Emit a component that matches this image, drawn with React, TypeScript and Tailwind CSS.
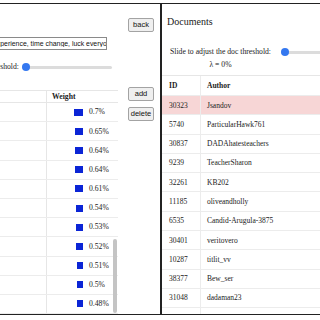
const words = [
  { w: "experience", p: 0.7 },
  { w: "time", p: 0.65 },
  { w: "change", p: 0.64 },
  { w: "luck", p: 0.64 },
  { w: "everyone", p: 0.61 },
  { w: "job", p: 0.54 },
  { w: "work", p: 0.53 },
  { w: "life", p: 0.52 },
  { w: "people", p: 0.51 },
  { w: "years", p: 0.5 },
  { w: "school", p: 0.48 },
  { w: "teacher", p: 0.47 },
];

const docs = [
  ["30323", "Jsandov"],
  ["5740", "ParticularHawk761"],
  ["30837", "DADAhatesteachers"],
  ["9239", "TeacherSharon"],
  ["32261", "KB202"],
  ["11185", "oliveandholly"],
  ["6535", "Candid-Arugula-3875"],
  ["30401", "veritovero"],
  ["10287", "titlit_vv"],
  ["38377", "Bew_ser"],
  ["31048", "dadaman23"],
  ["2946", "Eraser_flower"],
];

const serif = "font-['Liberation_Serif',Georgia,serif]";
const sans = "font-['Liberation_Sans',Arial,sans-serif]";

function Btn({ label }: { label: string }) {
  return (
    <button className={`w-[26px] h-[14px] flex items-center justify-center rounded-[2px] border border-[#a3a3a3] bg-[#efefef] text-[7.5px] leading-none text-[#111] ${sans}`}>
      {label}
    </button>
  );
}

function Slider({ width }: { width: number }) {
  return (
    <div className="relative h-[8px] flex items-center" style={{ width }}>
      <div className="w-full h-[3px] rounded-full bg-[#dcdcdc]" />
      <div className="absolute left-0 top-0 w-[8px] h-[8px] rounded-full bg-[#3478f0]" />
    </div>
  );
}

function WordPanel() {
  return (
    <div className="w-[161px] h-full shrink-0 overflow-hidden border-y border-r border-[#222]">
      <div className="flex ml-[-100px]">
        <div className="w-[218px] shrink-0 pt-[33px]">
          <input
            readOnly
            value="experience, time change, luck everyone"
            className={`block ml-[91px] w-[116px] h-[13px] border border-[#8a8a8a] pl-[1px] pr-0 text-[6.9px] text-[#111] outline-none ${sans}`}
          />
          <div className={`flex items-center mt-[12px] ${serif} text-[7.7px] text-[#222]`}>
            <div className="w-[119px] text-right whitespace-nowrap leading-[10px]">Slide to adjust the word threshold:</div>
            <div className="ml-[3px]">
              <Slider width={90} />
            </div>
          </div>
          <div className={`relative mt-[18px] border-t border-[#e6e6e6] ${serif} text-[7.7px] text-[#222]`}>
            <div className="flex h-[12px] items-center border-b border-[#e6e6e6] font-bold">
              <div className="w-[147px] h-full pl-[6px] flex items-center border-r border-[#e6e6e6]">Word</div>
              <div className="pl-[5px]">Weight</div>
            </div>
            {words.map((r) => (
              <div key={r.w} className="flex h-[19.2px] items-center border-b border-[#ececec]">
                <div className="w-[147px] h-full pl-[6px] flex items-center border-r border-[#e6e6e6]">{r.w}</div>
                <div className="w-[36px] flex justify-end">
                  <div className="h-[7px] bg-[#0b25d6]" style={{ width: Math.round(r.p * 12.5) }} />
                </div>
                <div className="ml-[6px]">{r.p}%</div>
              </div>
            ))}
            <div className="absolute right-[1px] top-[148px] w-[4px] h-[74px] rounded-full bg-[#c4c4c4]" />
          </div>
        </div>
        <div className="ml-[10px] pt-[14px] flex flex-col">
          <Btn label="back" />
          <div className="mt-[55px]">
            <Btn label="add" />
          </div>
          <div className="mt-[6px]">
            <Btn label="delete" />
          </div>
        </div>
      </div>
    </div>
  );
}

function DocPanel() {
  return (
    <div className={`w-[300px] h-full shrink-0 overflow-hidden border-y border-l border-[#222] ${serif} text-[#222]`}>
      <div className="ml-[5px] mt-[12px] text-[10px] leading-[12px]">Documents</div>
      <div className="flex items-start mt-[19px] ml-[8px] text-[7.7px]">
        <div className="flex flex-col items-center">
          <div className="leading-[10px] whitespace-nowrap">Slide to adjust the doc threshold:</div>
          <div className="leading-[10px] mt-[3px]">λ = 0%</div>
        </div>
        <div className="ml-[10px] mt-[1px]">
          <Slider width={120} />
        </div>
      </div>
      <div className="mt-[5px] border-t border-[#e6e6e6] text-[7.5px]">
        <div className="flex h-[20px] items-center border-b border-[#ececec] font-bold">
          <div className="w-[39px] h-full pl-[7px] flex items-center border-r border-[#ececec]">ID</div>
          <div className="pl-[6px]">Author</div>
        </div>
        {docs.map(([id, author], i) => (
          <div key={id} className={`flex h-[19.3px] items-center border-b border-[#ececec] ${i === 0 ? "bg-[#f7d6d6]" : ""}`}>
            <div className="w-[39px] h-full pl-[7px] flex items-center border-r border-[#ececec]">{id}</div>
            <div className="pl-[6px]">{author}</div>
          </div>
        ))}
      </div>
    </div>
  );
}

export default function App() {
  return (
    <div className="w-[320px] h-[320px] overflow-hidden bg-white pt-[3px]">
      <div className="flex h-[312px]">
        <WordPanel />
        <DocPanel />
      </div>
    </div>
  );
}
